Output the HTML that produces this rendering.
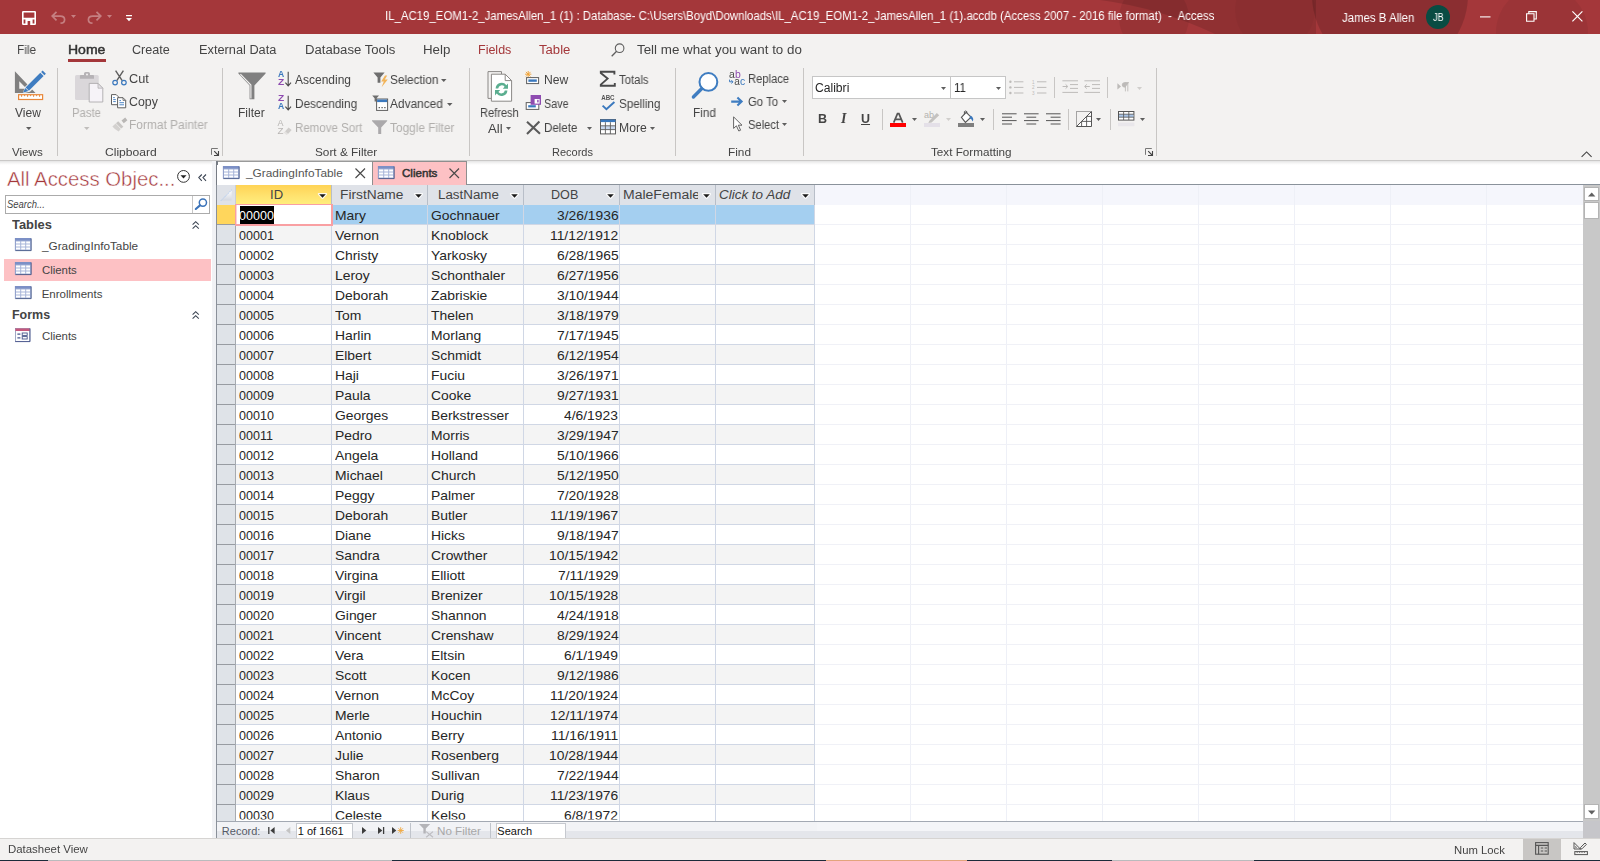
<!DOCTYPE html><html><head><meta charset="utf-8"><title>Access</title><style>

*{margin:0;padding:0;box-sizing:border-box}
html,body{width:1600px;height:861px;overflow:hidden;background:#fff}
body{position:relative;font-family:"Liberation Sans",sans-serif;font-size:12px;color:#444}
.b{position:absolute}
.t{position:absolute;z-index:4;white-space:pre;line-height:20px;height:20px;transform-origin:0 50%}
.i{position:absolute;overflow:visible;z-index:4}

</style></head><body>
<div class="b" style="left:0px;top:0px;width:1600px;height:34px;background:#A4373A;"></div>
<svg class="i" style="left:0;top:0;overflow:hidden" width="1600" height="34" viewBox="0 0 1600 34"><circle cx="1154" cy="18" r="35" fill="rgba(0,0,0,0.07)"/><path d="M1100 0Q1160 8 1215 34H1316V0Z" fill="rgba(0,0,0,0.12)"/><circle cx="1390" cy="-5" r="78" fill="rgba(0,0,0,0.15)"/><circle cx="1275" cy="10" r="40" fill="rgba(0,0,0,0.03)"/><circle cx="1542" cy="32" r="46" fill="rgba(0,0,0,0.05)"/></svg>
<div class="b" style="left:1426px;top:5px;width:24px;height:24px;background:#0B5A4F;border-radius:50%"></div>
<div class="b" style="left:0px;top:34px;width:1600px;height:126px;background:#F3F2F1;"></div>
<div class="b" style="left:0px;top:160px;width:1600px;height:1px;background:#C9C8C7;"></div>
<div class="b" style="left:0px;top:161px;width:1600px;height:4px;background:linear-gradient(#E4E4E4,#F4F4F4 50%,#FFFFFF);"></div>
<div class="b" style="left:68px;top:59px;width:38px;height:3px;background:#A4373A;"></div>
<div class="b" style="left:57px;top:68px;width:1px;height:88px;background:#C8C6C4;"></div>
<div class="b" style="left:222px;top:68px;width:1px;height:88px;background:#C8C6C4;"></div>
<div class="b" style="left:469px;top:68px;width:1px;height:88px;background:#C8C6C4;"></div>
<div class="b" style="left:675px;top:68px;width:1px;height:88px;background:#C8C6C4;"></div>
<div class="b" style="left:803px;top:68px;width:1px;height:88px;background:#C8C6C4;"></div>
<div class="b" style="left:1156px;top:68px;width:1px;height:88px;background:#C8C6C4;"></div>
<div class="b" style="left:812px;top:76px;width:139px;height:23px;background:#fff;border:1px solid #C6C6C6"></div>
<div class="b" style="left:950px;top:76px;width:56px;height:23px;background:#fff;border:1px solid #C6C6C6"></div>
<div class="b" style="left:1054px;top:77px;width:1px;height:21px;background:#C8C6C4;"></div>
<div class="b" style="left:1107px;top:77px;width:1px;height:21px;background:#C8C6C4;"></div>
<div class="b" style="left:882px;top:109px;width:1px;height:21px;background:#C8C6C4;"></div>
<div class="b" style="left:993px;top:109px;width:1px;height:21px;background:#C8C6C4;"></div>
<div class="b" style="left:1068px;top:109px;width:1px;height:21px;background:#C8C6C4;"></div>
<div class="b" style="left:1110px;top:109px;width:1px;height:21px;background:#C8C6C4;"></div>
<div class="b" style="left:0px;top:165px;width:212px;height:673px;background:#fff;"></div>
<div class="b" style="left:212px;top:161px;width:5px;height:677px;background:#F1F2F5;"></div>
<div class="b" style="left:216px;top:161px;width:1px;height:677px;background:#8A9099;"></div>
<div class="b" style="left:216px;top:161px;width:2px;height:24px;background:#777C84;"></div>
<div class="b" style="left:5px;top:195px;width:205px;height:19px;background:#fff;border:1px solid #ABABAB"></div>
<div class="b" style="left:192px;top:196px;width:1px;height:17px;background:#C6C6C6;"></div>
<div class="b" style="left:4px;top:259px;width:207px;height:22px;background:#FDC1C4;"></div>
<div class="b" style="left:217px;top:165px;width:1383px;height:20px;background:#fff;"></div>
<div class="b" style="left:218px;top:161px;width:154px;height:24px;background:#fff;border-top:1px solid #9A9A9A"></div>
<div class="b" style="left:372px;top:161px;width:95px;height:24px;background:#FDC1C4;border:1px solid #8E8E8E;border-bottom:none"></div>
<div class="b" style="left:467px;top:184px;width:1133px;height:1px;background:#8A929B;"></div>
<div class="b" style="left:217px;top:185px;width:598px;height:20px;background:#DFE2E8;"></div>
<div class="b" style="left:236px;top:185px;width:95px;height:19px;background:linear-gradient(#FFD355,#FFE370 60%,#FFEE7C);"></div>
<div class="b" style="left:815px;top:185px;width:768px;height:20px;background:#F5F6FC;"></div>
<div class="b" style="left:331px;top:185px;width:1px;height:20px;background:#B8BEC8;"></div>
<div class="b" style="left:427px;top:185px;width:1px;height:20px;background:#B8BEC8;"></div>
<div class="b" style="left:523px;top:185px;width:1px;height:20px;background:#B8BEC8;"></div>
<div class="b" style="left:619px;top:185px;width:1px;height:20px;background:#B8BEC8;"></div>
<div class="b" style="left:715px;top:185px;width:1px;height:20px;background:#B8BEC8;"></div>
<div class="b" style="left:814px;top:185px;width:1px;height:20px;background:#B8BEC8;"></div>
<div class="b" style="left:235px;top:185px;width:1px;height:20px;background:#C9CED6;"></div>
<div class="b" style="left:217px;top:205px;width:19px;height:20px;background:#FFD65C;"></div>
<div class="b" style="left:236px;top:205px;width:579px;height:19px;background:#A4CFF0;"></div>
<div class="b" style="left:235px;top:204px;width:98px;height:22px;background:#fff;border:solid #F99FA2;border-width:1px 2px 2px 1px;box-shadow:inset 1px 0 0 0 #FCD3D5;z-index:2"></div>
<div class="b" style="left:240px;top:206px;width:34px;height:18px;background:#000;z-index:2"></div>
<div class="b" style="left:236px;top:224px;width:579px;height:1px;background:#D0D7E5;"></div>
<div class="b" style="left:217px;top:224px;width:18px;height:1px;background:#989CA2;"></div>
<div class="b" style="left:217px;top:225px;width:19px;height:20px;background:#DFE3E8;"></div>
<div class="b" style="left:236px;top:225px;width:579px;height:20px;background:#F4F4F4;"></div>
<div class="b" style="left:236px;top:244px;width:579px;height:1px;background:#D0D7E5;"></div>
<div class="b" style="left:217px;top:244px;width:18px;height:1px;background:#989CA2;"></div>
<div class="b" style="left:217px;top:245px;width:19px;height:20px;background:#DFE3E8;"></div>
<div class="b" style="left:236px;top:245px;width:579px;height:20px;background:#FFFFFF;"></div>
<div class="b" style="left:236px;top:264px;width:579px;height:1px;background:#D0D7E5;"></div>
<div class="b" style="left:217px;top:264px;width:18px;height:1px;background:#989CA2;"></div>
<div class="b" style="left:217px;top:265px;width:19px;height:20px;background:#DFE3E8;"></div>
<div class="b" style="left:236px;top:265px;width:579px;height:20px;background:#F4F4F4;"></div>
<div class="b" style="left:236px;top:284px;width:579px;height:1px;background:#D0D7E5;"></div>
<div class="b" style="left:217px;top:284px;width:18px;height:1px;background:#989CA2;"></div>
<div class="b" style="left:217px;top:285px;width:19px;height:20px;background:#DFE3E8;"></div>
<div class="b" style="left:236px;top:285px;width:579px;height:20px;background:#FFFFFF;"></div>
<div class="b" style="left:236px;top:304px;width:579px;height:1px;background:#D0D7E5;"></div>
<div class="b" style="left:217px;top:304px;width:18px;height:1px;background:#989CA2;"></div>
<div class="b" style="left:217px;top:305px;width:19px;height:20px;background:#DFE3E8;"></div>
<div class="b" style="left:236px;top:305px;width:579px;height:20px;background:#F4F4F4;"></div>
<div class="b" style="left:236px;top:324px;width:579px;height:1px;background:#D0D7E5;"></div>
<div class="b" style="left:217px;top:324px;width:18px;height:1px;background:#989CA2;"></div>
<div class="b" style="left:217px;top:325px;width:19px;height:20px;background:#DFE3E8;"></div>
<div class="b" style="left:236px;top:325px;width:579px;height:20px;background:#FFFFFF;"></div>
<div class="b" style="left:236px;top:344px;width:579px;height:1px;background:#D0D7E5;"></div>
<div class="b" style="left:217px;top:344px;width:18px;height:1px;background:#989CA2;"></div>
<div class="b" style="left:217px;top:345px;width:19px;height:20px;background:#DFE3E8;"></div>
<div class="b" style="left:236px;top:345px;width:579px;height:20px;background:#F4F4F4;"></div>
<div class="b" style="left:236px;top:364px;width:579px;height:1px;background:#D0D7E5;"></div>
<div class="b" style="left:217px;top:364px;width:18px;height:1px;background:#989CA2;"></div>
<div class="b" style="left:217px;top:365px;width:19px;height:20px;background:#DFE3E8;"></div>
<div class="b" style="left:236px;top:365px;width:579px;height:20px;background:#FFFFFF;"></div>
<div class="b" style="left:236px;top:384px;width:579px;height:1px;background:#D0D7E5;"></div>
<div class="b" style="left:217px;top:384px;width:18px;height:1px;background:#989CA2;"></div>
<div class="b" style="left:217px;top:385px;width:19px;height:20px;background:#DFE3E8;"></div>
<div class="b" style="left:236px;top:385px;width:579px;height:20px;background:#F4F4F4;"></div>
<div class="b" style="left:236px;top:404px;width:579px;height:1px;background:#D0D7E5;"></div>
<div class="b" style="left:217px;top:404px;width:18px;height:1px;background:#989CA2;"></div>
<div class="b" style="left:217px;top:405px;width:19px;height:20px;background:#DFE3E8;"></div>
<div class="b" style="left:236px;top:405px;width:579px;height:20px;background:#FFFFFF;"></div>
<div class="b" style="left:236px;top:424px;width:579px;height:1px;background:#D0D7E5;"></div>
<div class="b" style="left:217px;top:424px;width:18px;height:1px;background:#989CA2;"></div>
<div class="b" style="left:217px;top:425px;width:19px;height:20px;background:#DFE3E8;"></div>
<div class="b" style="left:236px;top:425px;width:579px;height:20px;background:#F4F4F4;"></div>
<div class="b" style="left:236px;top:444px;width:579px;height:1px;background:#D0D7E5;"></div>
<div class="b" style="left:217px;top:444px;width:18px;height:1px;background:#989CA2;"></div>
<div class="b" style="left:217px;top:445px;width:19px;height:20px;background:#DFE3E8;"></div>
<div class="b" style="left:236px;top:445px;width:579px;height:20px;background:#FFFFFF;"></div>
<div class="b" style="left:236px;top:464px;width:579px;height:1px;background:#D0D7E5;"></div>
<div class="b" style="left:217px;top:464px;width:18px;height:1px;background:#989CA2;"></div>
<div class="b" style="left:217px;top:465px;width:19px;height:20px;background:#DFE3E8;"></div>
<div class="b" style="left:236px;top:465px;width:579px;height:20px;background:#F4F4F4;"></div>
<div class="b" style="left:236px;top:484px;width:579px;height:1px;background:#D0D7E5;"></div>
<div class="b" style="left:217px;top:484px;width:18px;height:1px;background:#989CA2;"></div>
<div class="b" style="left:217px;top:485px;width:19px;height:20px;background:#DFE3E8;"></div>
<div class="b" style="left:236px;top:485px;width:579px;height:20px;background:#FFFFFF;"></div>
<div class="b" style="left:236px;top:504px;width:579px;height:1px;background:#D0D7E5;"></div>
<div class="b" style="left:217px;top:504px;width:18px;height:1px;background:#989CA2;"></div>
<div class="b" style="left:217px;top:505px;width:19px;height:20px;background:#DFE3E8;"></div>
<div class="b" style="left:236px;top:505px;width:579px;height:20px;background:#F4F4F4;"></div>
<div class="b" style="left:236px;top:524px;width:579px;height:1px;background:#D0D7E5;"></div>
<div class="b" style="left:217px;top:524px;width:18px;height:1px;background:#989CA2;"></div>
<div class="b" style="left:217px;top:525px;width:19px;height:20px;background:#DFE3E8;"></div>
<div class="b" style="left:236px;top:525px;width:579px;height:20px;background:#FFFFFF;"></div>
<div class="b" style="left:236px;top:544px;width:579px;height:1px;background:#D0D7E5;"></div>
<div class="b" style="left:217px;top:544px;width:18px;height:1px;background:#989CA2;"></div>
<div class="b" style="left:217px;top:545px;width:19px;height:20px;background:#DFE3E8;"></div>
<div class="b" style="left:236px;top:545px;width:579px;height:20px;background:#F4F4F4;"></div>
<div class="b" style="left:236px;top:564px;width:579px;height:1px;background:#D0D7E5;"></div>
<div class="b" style="left:217px;top:564px;width:18px;height:1px;background:#989CA2;"></div>
<div class="b" style="left:217px;top:565px;width:19px;height:20px;background:#DFE3E8;"></div>
<div class="b" style="left:236px;top:565px;width:579px;height:20px;background:#FFFFFF;"></div>
<div class="b" style="left:236px;top:584px;width:579px;height:1px;background:#D0D7E5;"></div>
<div class="b" style="left:217px;top:584px;width:18px;height:1px;background:#989CA2;"></div>
<div class="b" style="left:217px;top:585px;width:19px;height:20px;background:#DFE3E8;"></div>
<div class="b" style="left:236px;top:585px;width:579px;height:20px;background:#F4F4F4;"></div>
<div class="b" style="left:236px;top:604px;width:579px;height:1px;background:#D0D7E5;"></div>
<div class="b" style="left:217px;top:604px;width:18px;height:1px;background:#989CA2;"></div>
<div class="b" style="left:217px;top:605px;width:19px;height:20px;background:#DFE3E8;"></div>
<div class="b" style="left:236px;top:605px;width:579px;height:20px;background:#FFFFFF;"></div>
<div class="b" style="left:236px;top:624px;width:579px;height:1px;background:#D0D7E5;"></div>
<div class="b" style="left:217px;top:624px;width:18px;height:1px;background:#989CA2;"></div>
<div class="b" style="left:217px;top:625px;width:19px;height:20px;background:#DFE3E8;"></div>
<div class="b" style="left:236px;top:625px;width:579px;height:20px;background:#F4F4F4;"></div>
<div class="b" style="left:236px;top:644px;width:579px;height:1px;background:#D0D7E5;"></div>
<div class="b" style="left:217px;top:644px;width:18px;height:1px;background:#989CA2;"></div>
<div class="b" style="left:217px;top:645px;width:19px;height:20px;background:#DFE3E8;"></div>
<div class="b" style="left:236px;top:645px;width:579px;height:20px;background:#FFFFFF;"></div>
<div class="b" style="left:236px;top:664px;width:579px;height:1px;background:#D0D7E5;"></div>
<div class="b" style="left:217px;top:664px;width:18px;height:1px;background:#989CA2;"></div>
<div class="b" style="left:217px;top:665px;width:19px;height:20px;background:#DFE3E8;"></div>
<div class="b" style="left:236px;top:665px;width:579px;height:20px;background:#F4F4F4;"></div>
<div class="b" style="left:236px;top:684px;width:579px;height:1px;background:#D0D7E5;"></div>
<div class="b" style="left:217px;top:684px;width:18px;height:1px;background:#989CA2;"></div>
<div class="b" style="left:217px;top:685px;width:19px;height:20px;background:#DFE3E8;"></div>
<div class="b" style="left:236px;top:685px;width:579px;height:20px;background:#FFFFFF;"></div>
<div class="b" style="left:236px;top:704px;width:579px;height:1px;background:#D0D7E5;"></div>
<div class="b" style="left:217px;top:704px;width:18px;height:1px;background:#989CA2;"></div>
<div class="b" style="left:217px;top:705px;width:19px;height:20px;background:#DFE3E8;"></div>
<div class="b" style="left:236px;top:705px;width:579px;height:20px;background:#F4F4F4;"></div>
<div class="b" style="left:236px;top:724px;width:579px;height:1px;background:#D0D7E5;"></div>
<div class="b" style="left:217px;top:724px;width:18px;height:1px;background:#989CA2;"></div>
<div class="b" style="left:217px;top:725px;width:19px;height:20px;background:#DFE3E8;"></div>
<div class="b" style="left:236px;top:725px;width:579px;height:20px;background:#FFFFFF;"></div>
<div class="b" style="left:236px;top:744px;width:579px;height:1px;background:#D0D7E5;"></div>
<div class="b" style="left:217px;top:744px;width:18px;height:1px;background:#989CA2;"></div>
<div class="b" style="left:217px;top:745px;width:19px;height:20px;background:#DFE3E8;"></div>
<div class="b" style="left:236px;top:745px;width:579px;height:20px;background:#F4F4F4;"></div>
<div class="b" style="left:236px;top:764px;width:579px;height:1px;background:#D0D7E5;"></div>
<div class="b" style="left:217px;top:764px;width:18px;height:1px;background:#989CA2;"></div>
<div class="b" style="left:217px;top:765px;width:19px;height:20px;background:#DFE3E8;"></div>
<div class="b" style="left:236px;top:765px;width:579px;height:20px;background:#FFFFFF;"></div>
<div class="b" style="left:236px;top:784px;width:579px;height:1px;background:#D0D7E5;"></div>
<div class="b" style="left:217px;top:784px;width:18px;height:1px;background:#989CA2;"></div>
<div class="b" style="left:217px;top:785px;width:19px;height:20px;background:#DFE3E8;"></div>
<div class="b" style="left:236px;top:785px;width:579px;height:20px;background:#F4F4F4;"></div>
<div class="b" style="left:236px;top:804px;width:579px;height:1px;background:#D0D7E5;"></div>
<div class="b" style="left:217px;top:804px;width:18px;height:1px;background:#989CA2;"></div>
<div class="b" style="left:217px;top:805px;width:19px;height:16px;background:#DFE3E8;"></div>
<div class="b" style="left:236px;top:805px;width:579px;height:16px;background:#FFFFFF;"></div>
<div class="b" style="left:698.2px;top:186px;width:3.6px;height:18px;background:#DFE2E8;z-index:5"></div>
<div class="b" style="left:331px;top:205px;width:1px;height:616px;background:#D0D7E5;"></div>
<div class="b" style="left:427px;top:205px;width:1px;height:616px;background:#D0D7E5;"></div>
<div class="b" style="left:523px;top:205px;width:1px;height:616px;background:#D0D7E5;"></div>
<div class="b" style="left:619px;top:205px;width:1px;height:616px;background:#D0D7E5;"></div>
<div class="b" style="left:715px;top:205px;width:1px;height:616px;background:#D0D7E5;"></div>
<div class="b" style="left:814px;top:205px;width:1px;height:616px;background:#D0D7E5;"></div>
<div class="b" style="left:235px;top:225px;width:1px;height:596px;background:#A6AAB0;"></div>
<div class="b" style="left:910px;top:185px;width:1px;height:636px;background:#EEF0F7;"></div>
<div class="b" style="left:1006px;top:185px;width:1px;height:636px;background:#EEF0F7;"></div>
<div class="b" style="left:1102px;top:185px;width:1px;height:636px;background:#EEF0F7;"></div>
<div class="b" style="left:1198px;top:185px;width:1px;height:636px;background:#EEF0F7;"></div>
<div class="b" style="left:1294px;top:185px;width:1px;height:636px;background:#EEF0F7;"></div>
<div class="b" style="left:1390px;top:185px;width:1px;height:636px;background:#EEF0F7;"></div>
<div class="b" style="left:1486px;top:185px;width:1px;height:636px;background:#EEF0F7;"></div>
<div class="b" style="left:815px;top:224px;width:768px;height:1px;background:#F0F1F7;"></div>
<div class="b" style="left:815px;top:244px;width:768px;height:1px;background:#F0F1F7;"></div>
<div class="b" style="left:815px;top:264px;width:768px;height:1px;background:#F0F1F7;"></div>
<div class="b" style="left:815px;top:284px;width:768px;height:1px;background:#F0F1F7;"></div>
<div class="b" style="left:815px;top:304px;width:768px;height:1px;background:#F0F1F7;"></div>
<div class="b" style="left:815px;top:324px;width:768px;height:1px;background:#F0F1F7;"></div>
<div class="b" style="left:815px;top:344px;width:768px;height:1px;background:#F0F1F7;"></div>
<div class="b" style="left:815px;top:364px;width:768px;height:1px;background:#F0F1F7;"></div>
<div class="b" style="left:815px;top:384px;width:768px;height:1px;background:#F0F1F7;"></div>
<div class="b" style="left:815px;top:404px;width:768px;height:1px;background:#F0F1F7;"></div>
<div class="b" style="left:815px;top:424px;width:768px;height:1px;background:#F0F1F7;"></div>
<div class="b" style="left:815px;top:444px;width:768px;height:1px;background:#F0F1F7;"></div>
<div class="b" style="left:815px;top:464px;width:768px;height:1px;background:#F0F1F7;"></div>
<div class="b" style="left:815px;top:484px;width:768px;height:1px;background:#F0F1F7;"></div>
<div class="b" style="left:815px;top:504px;width:768px;height:1px;background:#F0F1F7;"></div>
<div class="b" style="left:815px;top:524px;width:768px;height:1px;background:#F0F1F7;"></div>
<div class="b" style="left:815px;top:544px;width:768px;height:1px;background:#F0F1F7;"></div>
<div class="b" style="left:815px;top:564px;width:768px;height:1px;background:#F0F1F7;"></div>
<div class="b" style="left:815px;top:584px;width:768px;height:1px;background:#F0F1F7;"></div>
<div class="b" style="left:815px;top:604px;width:768px;height:1px;background:#F0F1F7;"></div>
<div class="b" style="left:815px;top:624px;width:768px;height:1px;background:#F0F1F7;"></div>
<div class="b" style="left:815px;top:644px;width:768px;height:1px;background:#F0F1F7;"></div>
<div class="b" style="left:815px;top:664px;width:768px;height:1px;background:#F0F1F7;"></div>
<div class="b" style="left:815px;top:684px;width:768px;height:1px;background:#F0F1F7;"></div>
<div class="b" style="left:815px;top:704px;width:768px;height:1px;background:#F0F1F7;"></div>
<div class="b" style="left:815px;top:724px;width:768px;height:1px;background:#F0F1F7;"></div>
<div class="b" style="left:815px;top:744px;width:768px;height:1px;background:#F0F1F7;"></div>
<div class="b" style="left:815px;top:764px;width:768px;height:1px;background:#F0F1F7;"></div>
<div class="b" style="left:815px;top:784px;width:768px;height:1px;background:#F0F1F7;"></div>
<div class="b" style="left:815px;top:804px;width:768px;height:1px;background:#F0F1F7;"></div>
<div class="b" style="left:1583px;top:185px;width:17px;height:636px;background:#C8C8C8;"></div>
<div class="b" style="left:1584px;top:187px;width:15px;height:14px;background:#fff;border:1px solid #B4B4B4"></div>
<div class="b" style="left:1584px;top:202px;width:15px;height:17px;background:#fff;border:1px solid #B4B4B4"></div>
<div class="b" style="left:1584px;top:804px;width:15px;height:15px;background:#fff;border:1px solid #B4B4B4"></div>
<div class="b" style="left:217px;top:821px;width:1366px;height:1px;background:#A3A9B3;"></div>
<div class="b" style="left:217px;top:822px;width:600px;height:9px;background:#F2F3F6;"></div>
<div class="b" style="left:217px;top:831px;width:600px;height:7px;background:#E4E6EB;"></div>
<div class="b" style="left:817px;top:822px;width:766px;height:9px;background:#F4F5F8;"></div>
<div class="b" style="left:817px;top:831px;width:766px;height:7px;background:#E4E6EB;"></div>
<div class="b" style="left:1583px;top:821px;width:17px;height:17px;background:#C6C6CA;"></div>
<div class="b" style="left:296px;top:823px;width:57px;height:15px;background:#fff;border:1px solid #C6C9CF;border-bottom:none"></div>
<div class="b" style="left:496px;top:823px;width:70px;height:15px;background:#fff;border:1px solid #C6C9CF;border-bottom:none"></div>
<div class="b" style="left:410px;top:823px;width:1px;height:15px;background:#C0C4CB;"></div>
<div class="b" style="left:490px;top:823px;width:1px;height:15px;background:#C0C4CB;"></div>
<div class="b" style="left:0px;top:838px;width:1600px;height:22px;background:#F3F2F1;"></div>
<div class="b" style="left:0px;top:838px;width:1600px;height:1px;background:#D6D4D2;"></div>
<div class="b" style="left:1523px;top:839px;width:38px;height:21px;background:#C8C6C4;"></div>
<div class="b" style="left:0px;top:860px;width:1600px;height:1px;background:#1C2B3A;"></div>
<div class="b" style="left:48px;top:860px;width:344px;height:1px;background:#B9BBBD;"></div>
<div class="b" style="left:826px;top:860px;width:141px;height:1px;background:#E3A47C;"></div>
<div class="b" style="left:1112px;top:860px;width:142px;height:1px;background:#B9BBBD;"></div>
<span class="t" style="top:5.84px;font-size:12px;color:#fff;transform:scaleX(0.9506);left:384.98px;will-change:transform;">IL_AC19_EOM1-2_JamesAllen_1 (1) : Database- C:\Users\Boyd\Downloads\IL_AC19_EOM1-2_JamesAllen_1 (1).accdb (Access 2007 - 2016 file format)  -  Access</span>
<span class="t" style="top:7.67px;font-size:12.5px;color:#fff;transform:scaleX(0.9136);left:1342.25px;will-change:transform;">James B Allen</span>
<span class="t" style="top:7.54px;font-size:10px;color:#fff;transform:scaleX(0.9167);left:1432.65px;will-change:transform;">JB</span>
<span class="t" style="top:39.67px;font-size:12.5px;color:#444444;transform:scaleX(0.9464);left:16.55px;will-change:transform;">File</span>
<span class="t" style="top:39.67px;font-size:12.5px;color:#333;transform:scaleX(1.1209);left:67.75px;will-change:transform;-webkit-text-stroke:0.45px #333;">Home</span>
<span class="t" style="top:39.67px;font-size:12.5px;color:#444444;transform:scaleX(1.0092);left:131.75px;will-change:transform;">Create</span>
<span class="t" style="top:39.67px;font-size:12.5px;color:#444444;transform:scaleX(1.0217);left:199.25px;will-change:transform;">External Data</span>
<span class="t" style="top:39.67px;font-size:12.5px;color:#444444;transform:scaleX(1.0516);left:305.25px;will-change:transform;">Database Tools</span>
<span class="t" style="top:39.67px;font-size:12.5px;color:#444444;transform:scaleX(1.0644);left:423.25px;will-change:transform;">Help</span>
<span class="t" style="top:39.67px;font-size:12.5px;color:#A4373A;left:478.25px;will-change:transform;">Fields</span>
<span class="t" style="top:39.67px;font-size:12.5px;color:#A4373A;transform:scaleX(1.0497);left:539.25px;will-change:transform;">Table</span>
<span class="t" style="top:39.67px;font-size:12.5px;color:#444444;transform:scaleX(1.0689);left:637.25px;will-change:transform;">Tell me what you want to do</span>
<span class="t" style="top:142.19px;font-size:11px;color:#444444;transform:scaleX(1.0553);left:12.34px;will-change:transform;">Views</span>
<span class="t" style="top:142.19px;font-size:11px;color:#444444;transform:scaleX(1.0993);left:105.34px;will-change:transform;">Clipboard</span>
<span class="t" style="top:142.19px;font-size:11px;color:#444444;transform:scaleX(1.0722);left:314.74px;will-change:transform;">Sort &amp; Filter</span>
<span class="t" style="top:142.19px;font-size:11px;color:#444444;left:551.64px;will-change:transform;">Records</span>
<span class="t" style="top:142.19px;font-size:11px;color:#444444;transform:scaleX(1.0731);left:727.84px;will-change:transform;">Find</span>
<span class="t" style="top:142.19px;font-size:11px;color:#444444;transform:scaleX(1.0628);left:931.14px;will-change:transform;">Text Formatting</span>
<span class="t" style="top:103.14px;font-size:12px;color:#444444;left:15.28px;will-change:transform;">View</span>
<span class="t" style="top:103.14px;font-size:12px;color:#B1AFAD;transform:scaleX(0.9398);left:72.28px;will-change:transform;">Paste</span>
<span class="t" style="top:68.84px;font-size:12px;color:#444444;transform:scaleX(1.0617);left:129.28px;will-change:transform;">Cut</span>
<span class="t" style="top:91.84px;font-size:12px;color:#444444;transform:scaleX(1.0294);left:129.28px;will-change:transform;">Copy</span>
<span class="t" style="top:114.84px;font-size:12px;color:#B1AFAD;transform:scaleX(0.9935);left:129.28px;will-change:transform;">Format Painter</span>
<span class="t" style="top:103.14px;font-size:12px;color:#444444;left:238.48px;will-change:transform;">Filter</span>
<span class="t" style="top:69.84px;font-size:12px;color:#444444;left:294.68px;will-change:transform;">Ascending</span>
<span class="t" style="top:93.84px;font-size:12px;color:#444444;transform:scaleX(0.9805);left:294.68px;will-change:transform;">Descending</span>
<span class="t" style="top:117.84px;font-size:12px;color:#B1AFAD;transform:scaleX(0.9601);left:294.68px;will-change:transform;">Remove Sort</span>
<span class="t" style="top:69.84px;font-size:12px;color:#444444;transform:scaleX(0.9811);left:390.28px;will-change:transform;">Selection</span>
<span class="t" style="top:93.84px;font-size:12px;color:#444444;transform:scaleX(0.9900);left:390.28px;will-change:transform;">Advanced</span>
<span class="t" style="top:117.84px;font-size:12px;color:#B1AFAD;transform:scaleX(0.9872);left:390.28px;will-change:transform;">Toggle Filter</span>
<span class="t" style="top:103.14px;font-size:12px;color:#444444;transform:scaleX(0.9217);left:479.88px;will-change:transform;">Refresh</span>
<span class="t" style="top:118.84px;font-size:12px;color:#444444;transform:scaleX(1.0971);left:488.28px;will-change:transform;">All</span>
<span class="t" style="top:69.84px;font-size:12px;color:#444444;transform:scaleX(1.0093);left:543.68px;will-change:transform;">New</span>
<span class="t" style="top:93.84px;font-size:12px;color:#444444;transform:scaleX(0.8970);left:543.68px;will-change:transform;">Save</span>
<span class="t" style="top:117.84px;font-size:12px;color:#444444;transform:scaleX(0.9612);left:543.68px;will-change:transform;">Delete</span>
<span class="t" style="top:69.84px;font-size:12px;color:#444444;transform:scaleX(0.9436);left:619.28px;will-change:transform;">Totals</span>
<span class="t" style="top:93.84px;font-size:12px;color:#444444;transform:scaleX(0.9704);left:619.28px;will-change:transform;">Spelling</span>
<span class="t" style="top:117.84px;font-size:12px;color:#444444;transform:scaleX(1.0145);left:619.28px;will-change:transform;">More</span>
<span class="t" style="top:103.14px;font-size:12px;color:#444444;transform:scaleX(0.9784);left:692.78px;will-change:transform;">Find</span>
<span class="t" style="top:68.84px;font-size:12px;color:#444444;transform:scaleX(0.9343);left:747.78px;will-change:transform;">Replace</span>
<span class="t" style="top:91.84px;font-size:12px;color:#444444;transform:scaleX(0.9411);left:747.78px;will-change:transform;">Go To</span>
<span class="t" style="top:114.84px;font-size:12px;color:#444444;transform:scaleX(0.9305);left:747.78px;will-change:transform;">Select</span>
<span class="t" style="top:77.84px;font-size:12px;color:#262626;transform:scaleX(1.0095);left:814.78px;will-change:transform;">Calibri</span>
<span class="t" style="top:77.84px;font-size:12px;color:#262626;transform:scaleX(0.9496);left:953.78px;will-change:transform;">11</span>
<span class="t" style="top:108.67px;font-size:12.5px;color:#444;font-weight:700;left:818.25px;will-change:transform;">B</span>
<span class="t" style="top:108.67px;font-size:12.5px;color:#444;font-style:italic;left:840.75px;will-change:transform;font-family:'Liberation Serif',serif;font-weight:700;font-size:14px;">I</span>
<span class="t" style="top:108.67px;font-size:12.5px;color:#444;font-weight:700;left:861.45px;will-change:transform;text-decoration:underline;text-underline-offset:1px;">U</span>
<span class="t" style="top:168.86px;font-size:20.6px;color:#A4373A;transform:scaleX(0.9871);left:6.86px;-webkit-text-stroke:0.45px #fff;">All Access Objec...</span>
<span class="t" style="top:194.02px;font-size:11.5px;color:#444;font-style:italic;transform:scaleX(0.8213);left:7.31px;">Search...</span>
<span class="t" style="top:214.67px;font-size:12.5px;color:#444;font-weight:700;transform:scaleX(1.0311);left:11.55px;">Tables</span>
<span class="t" style="top:236.02px;font-size:11.5px;color:#444;transform:scaleX(1.0226);left:41.71px;">_GradingInfoTable</span>
<span class="t" style="top:260.02px;font-size:11.5px;color:#444;transform:scaleX(0.9900);left:41.71px;">Clients</span>
<span class="t" style="top:284.02px;font-size:11.5px;color:#444;left:41.71px;">Enrollments</span>
<span class="t" style="top:304.67px;font-size:12.5px;color:#444;font-weight:700;transform:scaleX(0.9966);left:12.05px;">Forms</span>
<span class="t" style="top:326.02px;font-size:11.5px;color:#444;transform:scaleX(0.9900);left:41.71px;">Clients</span>
<span class="t" style="top:163.02px;font-size:11.5px;color:#555;transform:scaleX(1.0300);left:246.31px;">_GradingInfoTable</span>
<span class="t" style="top:163.02px;font-size:11.5px;color:#333;transform:scaleX(1.0071);left:401.81px;-webkit-text-stroke:0.5px #333;">Clients</span>
<span class="t" style="top:184.67px;font-size:12.5px;color:#444;transform:scaleX(1.0460);left:270.36px;">ID</span>
<span class="t" style="top:184.67px;font-size:12.5px;color:#444;transform:scaleX(1.1009);left:339.55px;">FirstName</span>
<span class="t" style="top:184.67px;font-size:12.5px;color:#444;transform:scaleX(1.0683);left:437.55px;">LastName</span>
<span class="t" style="top:184.67px;font-size:12.5px;color:#444;transform:scaleX(1.0067);left:550.75px;">DOB</span>
<span class="t" style="top:184.67px;font-size:12.5px;color:#444;transform:scaleX(1.1206);left:622.55px;">MaleFemale</span>
<span class="t" style="top:184.67px;font-size:12.5px;color:#444;font-style:italic;transform:scaleX(1.0746);left:718.55px;">Click to Add</span>
<span class="t" style="top:205.50px;font-size:13px;color:#fff;transform:scaleX(0.9650);left:238.82px;">00000</span>
<span class="t" style="top:205.50px;font-size:13px;color:#262626;transform:scaleX(1.0680);left:335.02px;">Mary</span>
<span class="t" style="top:205.50px;font-size:13px;color:#262626;transform:scaleX(1.0680);left:430.82px;">Gochnauer</span>
<span class="t" style="top:205.50px;font-size:13px;color:#262626;transform:scaleX(1.0650);left:556.52px;">3/26/1936</span>
<span class="t" style="top:225.50px;font-size:13px;color:#262626;transform:scaleX(0.9650);left:238.82px;">00001</span>
<span class="t" style="top:225.50px;font-size:13px;color:#262626;transform:scaleX(1.0680);left:335.02px;">Vernon</span>
<span class="t" style="top:225.50px;font-size:13px;color:#262626;transform:scaleX(1.0680);left:430.82px;">Knoblock</span>
<span class="t" style="top:225.50px;font-size:13px;color:#262626;transform:scaleX(1.0650);left:549.84px;">11/12/1912</span>
<span class="t" style="top:245.50px;font-size:13px;color:#262626;transform:scaleX(0.9650);left:238.82px;">00002</span>
<span class="t" style="top:245.50px;font-size:13px;color:#262626;transform:scaleX(1.0680);left:335.02px;">Christy</span>
<span class="t" style="top:245.50px;font-size:13px;color:#262626;transform:scaleX(1.0680);left:430.82px;">Yarkosky</span>
<span class="t" style="top:245.50px;font-size:13px;color:#262626;transform:scaleX(1.0650);left:556.52px;">6/28/1965</span>
<span class="t" style="top:265.50px;font-size:13px;color:#262626;transform:scaleX(0.9650);left:238.82px;">00003</span>
<span class="t" style="top:265.50px;font-size:13px;color:#262626;transform:scaleX(1.0680);left:335.02px;">Leroy</span>
<span class="t" style="top:265.50px;font-size:13px;color:#262626;transform:scaleX(1.0680);left:430.82px;">Schonthaler</span>
<span class="t" style="top:265.50px;font-size:13px;color:#262626;transform:scaleX(1.0650);left:556.52px;">6/27/1956</span>
<span class="t" style="top:285.50px;font-size:13px;color:#262626;transform:scaleX(0.9650);left:238.82px;">00004</span>
<span class="t" style="top:285.50px;font-size:13px;color:#262626;transform:scaleX(1.0680);left:335.02px;">Deborah</span>
<span class="t" style="top:285.50px;font-size:13px;color:#262626;transform:scaleX(1.0680);left:430.82px;">Zabriskie</span>
<span class="t" style="top:285.50px;font-size:13px;color:#262626;transform:scaleX(1.0650);left:556.52px;">3/10/1944</span>
<span class="t" style="top:305.50px;font-size:13px;color:#262626;transform:scaleX(0.9650);left:238.82px;">00005</span>
<span class="t" style="top:305.50px;font-size:13px;color:#262626;transform:scaleX(1.0680);left:335.02px;">Tom</span>
<span class="t" style="top:305.50px;font-size:13px;color:#262626;transform:scaleX(1.0680);left:430.82px;">Thelen</span>
<span class="t" style="top:305.50px;font-size:13px;color:#262626;transform:scaleX(1.0650);left:556.52px;">3/18/1979</span>
<span class="t" style="top:325.50px;font-size:13px;color:#262626;transform:scaleX(0.9650);left:238.82px;">00006</span>
<span class="t" style="top:325.50px;font-size:13px;color:#262626;transform:scaleX(1.0680);left:335.02px;">Harlin</span>
<span class="t" style="top:325.50px;font-size:13px;color:#262626;transform:scaleX(1.0680);left:430.82px;">Morlang</span>
<span class="t" style="top:325.50px;font-size:13px;color:#262626;transform:scaleX(1.0650);left:556.52px;">7/17/1945</span>
<span class="t" style="top:345.50px;font-size:13px;color:#262626;transform:scaleX(0.9650);left:238.82px;">00007</span>
<span class="t" style="top:345.50px;font-size:13px;color:#262626;transform:scaleX(1.0680);left:335.02px;">Elbert</span>
<span class="t" style="top:345.50px;font-size:13px;color:#262626;transform:scaleX(1.0680);left:430.82px;">Schmidt</span>
<span class="t" style="top:345.50px;font-size:13px;color:#262626;transform:scaleX(1.0650);left:556.52px;">6/12/1954</span>
<span class="t" style="top:365.50px;font-size:13px;color:#262626;transform:scaleX(0.9650);left:238.82px;">00008</span>
<span class="t" style="top:365.50px;font-size:13px;color:#262626;transform:scaleX(1.0680);left:335.02px;">Haji</span>
<span class="t" style="top:365.50px;font-size:13px;color:#262626;transform:scaleX(1.0680);left:430.82px;">Fuciu</span>
<span class="t" style="top:365.50px;font-size:13px;color:#262626;transform:scaleX(1.0650);left:556.52px;">3/26/1971</span>
<span class="t" style="top:385.50px;font-size:13px;color:#262626;transform:scaleX(0.9650);left:238.82px;">00009</span>
<span class="t" style="top:385.50px;font-size:13px;color:#262626;transform:scaleX(1.0680);left:335.02px;">Paula</span>
<span class="t" style="top:385.50px;font-size:13px;color:#262626;transform:scaleX(1.0680);left:430.82px;">Cooke</span>
<span class="t" style="top:385.50px;font-size:13px;color:#262626;transform:scaleX(1.0650);left:556.52px;">9/27/1931</span>
<span class="t" style="top:405.50px;font-size:13px;color:#262626;transform:scaleX(0.9650);left:238.82px;">00010</span>
<span class="t" style="top:405.50px;font-size:13px;color:#262626;transform:scaleX(1.0680);left:335.02px;">Georges</span>
<span class="t" style="top:405.50px;font-size:13px;color:#262626;transform:scaleX(1.0680);left:430.82px;">Berkstresser</span>
<span class="t" style="top:405.50px;font-size:13px;color:#262626;transform:scaleX(1.0650);left:564.22px;">4/6/1923</span>
<span class="t" style="top:425.50px;font-size:13px;color:#262626;transform:scaleX(0.9650);left:238.82px;">00011</span>
<span class="t" style="top:425.50px;font-size:13px;color:#262626;transform:scaleX(1.0680);left:335.02px;">Pedro</span>
<span class="t" style="top:425.50px;font-size:13px;color:#262626;transform:scaleX(1.0680);left:430.82px;">Morris</span>
<span class="t" style="top:425.50px;font-size:13px;color:#262626;transform:scaleX(1.0650);left:556.52px;">3/29/1947</span>
<span class="t" style="top:445.50px;font-size:13px;color:#262626;transform:scaleX(0.9650);left:238.82px;">00012</span>
<span class="t" style="top:445.50px;font-size:13px;color:#262626;transform:scaleX(1.0680);left:335.02px;">Angela</span>
<span class="t" style="top:445.50px;font-size:13px;color:#262626;transform:scaleX(1.0680);left:430.82px;">Holland</span>
<span class="t" style="top:445.50px;font-size:13px;color:#262626;transform:scaleX(1.0650);left:556.52px;">5/10/1966</span>
<span class="t" style="top:465.50px;font-size:13px;color:#262626;transform:scaleX(0.9650);left:238.82px;">00013</span>
<span class="t" style="top:465.50px;font-size:13px;color:#262626;transform:scaleX(1.0680);left:335.02px;">Michael</span>
<span class="t" style="top:465.50px;font-size:13px;color:#262626;transform:scaleX(1.0680);left:430.82px;">Church</span>
<span class="t" style="top:465.50px;font-size:13px;color:#262626;transform:scaleX(1.0650);left:556.52px;">5/12/1950</span>
<span class="t" style="top:485.50px;font-size:13px;color:#262626;transform:scaleX(0.9650);left:238.82px;">00014</span>
<span class="t" style="top:485.50px;font-size:13px;color:#262626;transform:scaleX(1.0680);left:335.02px;">Peggy</span>
<span class="t" style="top:485.50px;font-size:13px;color:#262626;transform:scaleX(1.0680);left:430.82px;">Palmer</span>
<span class="t" style="top:485.50px;font-size:13px;color:#262626;transform:scaleX(1.0650);left:556.52px;">7/20/1928</span>
<span class="t" style="top:505.50px;font-size:13px;color:#262626;transform:scaleX(0.9650);left:238.82px;">00015</span>
<span class="t" style="top:505.50px;font-size:13px;color:#262626;transform:scaleX(1.0680);left:335.02px;">Deborah</span>
<span class="t" style="top:505.50px;font-size:13px;color:#262626;transform:scaleX(1.0680);left:430.82px;">Butler</span>
<span class="t" style="top:505.50px;font-size:13px;color:#262626;transform:scaleX(1.0650);left:549.84px;">11/19/1967</span>
<span class="t" style="top:525.50px;font-size:13px;color:#262626;transform:scaleX(0.9650);left:238.82px;">00016</span>
<span class="t" style="top:525.50px;font-size:13px;color:#262626;transform:scaleX(1.0680);left:335.02px;">Diane</span>
<span class="t" style="top:525.50px;font-size:13px;color:#262626;transform:scaleX(1.0680);left:430.82px;">Hicks</span>
<span class="t" style="top:525.50px;font-size:13px;color:#262626;transform:scaleX(1.0650);left:556.52px;">9/18/1947</span>
<span class="t" style="top:545.50px;font-size:13px;color:#262626;transform:scaleX(0.9650);left:238.82px;">00017</span>
<span class="t" style="top:545.50px;font-size:13px;color:#262626;transform:scaleX(1.0680);left:335.02px;">Sandra</span>
<span class="t" style="top:545.50px;font-size:13px;color:#262626;transform:scaleX(1.0680);left:430.82px;">Crowther</span>
<span class="t" style="top:545.50px;font-size:13px;color:#262626;transform:scaleX(1.0650);left:548.81px;">10/15/1942</span>
<span class="t" style="top:565.50px;font-size:13px;color:#262626;transform:scaleX(0.9650);left:238.82px;">00018</span>
<span class="t" style="top:565.50px;font-size:13px;color:#262626;transform:scaleX(1.0680);left:335.02px;">Virgina</span>
<span class="t" style="top:565.50px;font-size:13px;color:#262626;transform:scaleX(1.0680);left:430.82px;">Elliott</span>
<span class="t" style="top:565.50px;font-size:13px;color:#262626;transform:scaleX(1.0650);left:557.55px;">7/11/1929</span>
<span class="t" style="top:585.50px;font-size:13px;color:#262626;transform:scaleX(0.9650);left:238.82px;">00019</span>
<span class="t" style="top:585.50px;font-size:13px;color:#262626;transform:scaleX(1.0680);left:335.02px;">Virgil</span>
<span class="t" style="top:585.50px;font-size:13px;color:#262626;transform:scaleX(1.0680);left:430.82px;">Brenizer</span>
<span class="t" style="top:585.50px;font-size:13px;color:#262626;transform:scaleX(1.0650);left:548.81px;">10/15/1928</span>
<span class="t" style="top:605.50px;font-size:13px;color:#262626;transform:scaleX(0.9650);left:238.82px;">00020</span>
<span class="t" style="top:605.50px;font-size:13px;color:#262626;transform:scaleX(1.0680);left:335.02px;">Ginger</span>
<span class="t" style="top:605.50px;font-size:13px;color:#262626;transform:scaleX(1.0680);left:430.82px;">Shannon</span>
<span class="t" style="top:605.50px;font-size:13px;color:#262626;transform:scaleX(1.0650);left:556.52px;">4/24/1918</span>
<span class="t" style="top:625.50px;font-size:13px;color:#262626;transform:scaleX(0.9650);left:238.82px;">00021</span>
<span class="t" style="top:625.50px;font-size:13px;color:#262626;transform:scaleX(1.0680);left:335.02px;">Vincent</span>
<span class="t" style="top:625.50px;font-size:13px;color:#262626;transform:scaleX(1.0680);left:430.82px;">Crenshaw</span>
<span class="t" style="top:625.50px;font-size:13px;color:#262626;transform:scaleX(1.0650);left:556.52px;">8/29/1924</span>
<span class="t" style="top:645.50px;font-size:13px;color:#262626;transform:scaleX(0.9650);left:238.82px;">00022</span>
<span class="t" style="top:645.50px;font-size:13px;color:#262626;transform:scaleX(1.0680);left:335.02px;">Vera</span>
<span class="t" style="top:645.50px;font-size:13px;color:#262626;transform:scaleX(1.0680);left:430.82px;">Eltsin</span>
<span class="t" style="top:645.50px;font-size:13px;color:#262626;transform:scaleX(1.0650);left:564.22px;">6/1/1949</span>
<span class="t" style="top:665.50px;font-size:13px;color:#262626;transform:scaleX(0.9650);left:238.82px;">00023</span>
<span class="t" style="top:665.50px;font-size:13px;color:#262626;transform:scaleX(1.0680);left:335.02px;">Scott</span>
<span class="t" style="top:665.50px;font-size:13px;color:#262626;transform:scaleX(1.0680);left:430.82px;">Kocen</span>
<span class="t" style="top:665.50px;font-size:13px;color:#262626;transform:scaleX(1.0650);left:556.52px;">9/12/1986</span>
<span class="t" style="top:685.50px;font-size:13px;color:#262626;transform:scaleX(0.9650);left:238.82px;">00024</span>
<span class="t" style="top:685.50px;font-size:13px;color:#262626;transform:scaleX(1.0680);left:335.02px;">Vernon</span>
<span class="t" style="top:685.50px;font-size:13px;color:#262626;transform:scaleX(1.0680);left:430.82px;">McCoy</span>
<span class="t" style="top:685.50px;font-size:13px;color:#262626;transform:scaleX(1.0650);left:549.84px;">11/20/1924</span>
<span class="t" style="top:705.50px;font-size:13px;color:#262626;transform:scaleX(0.9650);left:238.82px;">00025</span>
<span class="t" style="top:705.50px;font-size:13px;color:#262626;transform:scaleX(1.0680);left:335.02px;">Merle</span>
<span class="t" style="top:705.50px;font-size:13px;color:#262626;transform:scaleX(1.0680);left:430.82px;">Houchin</span>
<span class="t" style="top:705.50px;font-size:13px;color:#262626;transform:scaleX(1.0650);left:549.84px;">12/11/1974</span>
<span class="t" style="top:725.50px;font-size:13px;color:#262626;transform:scaleX(0.9650);left:238.82px;">00026</span>
<span class="t" style="top:725.50px;font-size:13px;color:#262626;transform:scaleX(1.0680);left:335.02px;">Antonio</span>
<span class="t" style="top:725.50px;font-size:13px;color:#262626;transform:scaleX(1.0680);left:430.82px;">Berry</span>
<span class="t" style="top:725.50px;font-size:13px;color:#262626;transform:scaleX(1.0650);left:550.88px;">11/16/1911</span>
<span class="t" style="top:745.50px;font-size:13px;color:#262626;transform:scaleX(0.9650);left:238.82px;">00027</span>
<span class="t" style="top:745.50px;font-size:13px;color:#262626;transform:scaleX(1.0680);left:335.02px;">Julie</span>
<span class="t" style="top:745.50px;font-size:13px;color:#262626;transform:scaleX(1.0680);left:430.82px;">Rosenberg</span>
<span class="t" style="top:745.50px;font-size:13px;color:#262626;transform:scaleX(1.0650);left:548.81px;">10/28/1944</span>
<span class="t" style="top:765.50px;font-size:13px;color:#262626;transform:scaleX(0.9650);left:238.82px;">00028</span>
<span class="t" style="top:765.50px;font-size:13px;color:#262626;transform:scaleX(1.0680);left:335.02px;">Sharon</span>
<span class="t" style="top:765.50px;font-size:13px;color:#262626;transform:scaleX(1.0680);left:430.82px;">Sullivan</span>
<span class="t" style="top:765.50px;font-size:13px;color:#262626;transform:scaleX(1.0650);left:556.52px;">7/22/1944</span>
<span class="t" style="top:785.50px;font-size:13px;color:#262626;transform:scaleX(0.9650);left:238.82px;">00029</span>
<span class="t" style="top:785.50px;font-size:13px;color:#262626;transform:scaleX(1.0680);left:335.02px;">Klaus</span>
<span class="t" style="top:785.50px;font-size:13px;color:#262626;transform:scaleX(1.0680);left:430.82px;">Durig</span>
<span class="t" style="top:785.50px;font-size:13px;color:#262626;transform:scaleX(1.0650);left:549.84px;">11/23/1976</span>
<span class="t" style="top:805.50px;font-size:13px;color:#262626;transform:scaleX(0.9650);left:238.82px;clip-path:inset(0 0 6px 0);">00030</span>
<span class="t" style="top:805.50px;font-size:13px;color:#262626;transform:scaleX(1.0680);left:335.02px;clip-path:inset(0 0 6px 0);">Celeste</span>
<span class="t" style="top:805.50px;font-size:13px;color:#262626;transform:scaleX(1.0680);left:430.82px;clip-path:inset(0 0 6px 0);">Kelso</span>
<span class="t" style="top:805.50px;font-size:13px;color:#262626;transform:scaleX(1.0650);left:564.22px;clip-path:inset(0 0 6px 0);">6/8/1972</span>
<span class="t" style="top:821.19px;font-size:11px;color:#555A66;left:221.84px;">Record:</span>
<span class="t" style="top:821.19px;font-size:11px;color:#111;left:297.84px;">1 of 1661</span>
<span class="t" style="top:821.19px;font-size:11px;color:#A8A8A8;transform:scaleX(1.0579);left:437.14px;">No Filter</span>
<span class="t" style="top:821.19px;font-size:11px;color:#111;left:497.34px;">Search</span>
<span class="t" style="top:839.08px;font-size:11.3px;color:#444;transform:scaleX(1.0110);left:8.07px;will-change:transform;">Datasheet View</span>
<span class="t" style="top:840.08px;font-size:11.3px;color:#444;transform:scaleX(0.9928);left:1453.82px;will-change:transform;">Num Lock</span>
<svg class="i" style="left:22px;top:10.5px;" width="14" height="14" viewBox="0 0 14 14"><path fill="#fff" fill-rule="evenodd" d="M1.2 0H12.8Q14 0 14 1.2V12.8Q14 14 12.8 14H1.2Q0 14 0 12.8V1.2Q0 0 1.2 0ZM1.6 1.6V6.8H12.4V1.6ZM1.6 8.4V12.4H3.4V8.4ZM10.6 8.4V12.4H12.4V8.4ZM5.6 10V14H8.2V10Z"/></svg>
<svg class="i" style="left:50.5px;top:11px;" width="15" height="13" viewBox="0 0 15 13"><path d="M5.5 0.8L1.2 5.1L5.5 9.4M1.5 5.1H9.2Q13.6 5.1 13.6 8.7Q13.6 12 9.5 12.2" fill="none" stroke="#C57F81" stroke-width="1.7"/></svg>
<svg class="i" style="left:71.3px;top:15px;" width="5" height="3" viewBox="0 0 5 3"><path d="M0 0H5L2.5 3Z" fill="#C57F81"/></svg>
<svg class="i" style="left:87px;top:11px;" width="15" height="13" viewBox="0 0 15 13"><path d="M9.5 0.8L13.8 5.1L9.5 9.4M13.5 5.1H5.8Q1.4 5.1 1.4 8.7Q1.4 12 5.5 12.2" fill="none" stroke="#C57F81" stroke-width="1.7"/></svg>
<svg class="i" style="left:107px;top:15px;" width="5" height="3" viewBox="0 0 5 3"><path d="M0 0H5L2.5 3Z" fill="#C57F81"/></svg>
<svg class="i" style="left:126.4px;top:15px;" width="6" height="6.5" viewBox="0 0 6 6.5"><path d="M0 0H6V1.2H0ZM0 3H6L3 6.2Z" fill="#fff"/></svg>
<svg class="i" style="left:1480px;top:16px;" width="11" height="2" viewBox="0 0 11 2"><path d="M0 0.9H10.5" stroke="#fff" stroke-width="1.1"/></svg>
<svg class="i" style="left:1525.5px;top:10.5px;" width="11" height="11" viewBox="0 0 11 11"><path d="M0.6 2.8H8V10.3H0.6ZM2.8 2.8V0.6H10.3V8H8" fill="none" stroke="#fff" stroke-width="1.1"/></svg>
<svg class="i" style="left:1572px;top:11px;" width="11" height="11" viewBox="0 0 11 11"><path d="M0.4 0.4L10.4 10.4M10.4 0.4L0.4 10.4" stroke="#fff" stroke-width="1.2"/></svg>
<svg class="i" style="left:610.5px;top:42.5px;" width="14" height="14" viewBox="0 0 14 14"><circle cx="8.6" cy="5.2" r="4.3" fill="none" stroke="#5E5E5E" stroke-width="1.1"/><path d="M5.6 8.3L0.7 13.2" stroke="#5E5E5E" stroke-width="1.3"/></svg>
<svg class="i" style="left:14px;top:70px;" width="32" height="30" viewBox="0 0 32 30"><path d="M0.9 1.3V22.9H21.5Z M5.25 11.2V18.8H12.7Z" fill="#808080" fill-rule="evenodd"/>
<path d="M8.8 23.2L10.9 17L26.3 1.6L31.2 6.5L16 21.8Z" fill="#F3F2F1"/>
<path d="M11.6 17.4L26.3 2.7L29.6 6L14.9 20.7Z" fill="#3F7DC1"/>
<path d="M11.2 17.9L14.4 21.1L9 22.8Z" fill="#3F7DC1"/>
<path d="M27.1 1.9L28.6 0.4L31.9 3.7L30.4 5.2Z" fill="#3F7DC1"/>
<rect x="4.6" y="24.7" width="24" height="4.8" fill="#fff" stroke="#E8873A" stroke-width="1.2"/>
<path d="M7.6 25V26.8M10.6 25V26.2M13.6 25V26.8M16.6 25V26.2M19.6 25V26.8M22.6 25V26.2M25.6 25V26.8" stroke="#E8873A" stroke-width="1"/></svg>
<svg class="i" style="left:25.5px;top:126.5px;" width="5.5" height="3" viewBox="0 0 5.5 3"><path d="M0 0H5.5L2.75 3Z" fill="#5E5E5E"/></svg>
<svg class="i" style="left:75px;top:72px;" width="29" height="31" viewBox="0 0 29 31"><rect x="0" y="3" width="23.75" height="25" rx="1.6" fill="#DAD7DA"/>
<path d="M9 1.6Q9 0 10.6 0H13.4Q15 0 15 1.6V3H18Q19 3 19 4V6.8H4.9V4Q4.9 3 5.9 3H9Z" fill="#B6B3B6"/><circle cx="12" cy="2.4" r="1" fill="#F3F2F1"/>
<path d="M14.2 11.4H23L27.8 16.2V30H14.2Z" fill="#F6F3F8" stroke="#AEABAE" stroke-width="0.9"/>
<path d="M23 11.4V16.2H27.8Z" fill="#E4E1E6" stroke="#AEABAE" stroke-width="0.7"/></svg>
<svg class="i" style="left:84.3px;top:126.5px;" width="5.5" height="3" viewBox="0 0 5.5 3"><path d="M0 0H5.5L2.75 3Z" fill="#C0BEBC"/></svg>
<svg class="i" style="left:112px;top:70px;" width="15" height="16" viewBox="0 0 15 16"><path d="M3.6 0.6L10.2 10.6M11.4 0.6L4.8 10.6" stroke="#5E5E5E" stroke-width="1.4" fill="none"/>
<circle cx="3.1" cy="12.6" r="2.3" fill="none" stroke="#3A78BD" stroke-width="1.2"/><circle cx="11.9" cy="12.6" r="2.3" fill="none" stroke="#3A78BD" stroke-width="1.2"/></svg>
<svg class="i" style="left:111px;top:94px;" width="16" height="15" viewBox="0 0 16 15"><path d="M0.5 0.6H5.2L7.4 2.8V10.7H0.5Z" fill="#fff" stroke="#5E5E5E" stroke-width="1"/>
<path d="M2.2 3.6H3.8M2.2 5.6H4.8M2.2 7.6H4.8" stroke="#3A78BD" stroke-width="0.9"/>
<path d="M6.6 3.7H12L14.7 6.4V13.8H6.6Z" fill="#fff" stroke="#5E5E5E" stroke-width="1"/>
<path d="M12 3.7V6.4H14.7" fill="none" stroke="#5E5E5E" stroke-width="0.8"/>
<path d="M8.4 6.6H10M8.4 8.7H13M8.4 10.8H13" stroke="#3A78BD" stroke-width="0.9"/></svg>
<svg class="i" style="left:112px;top:117px;" width="16" height="15" viewBox="0 0 16 15"><path d="M9.5 3.5L13.2 0.6L15.4 3.2L11.8 6.2Z" fill="#B9B7B5"/>
<path d="M6.2 4.2L11.4 9.8L9.2 11.6L4 6.2Z" fill="#C8C6C4"/>
<path d="M3.6 6.6L8.8 12L6.6 14.4Q3 12.6 0.4 9.4Z" fill="#D3D1CF"/></svg>
<svg class="i" style="left:211px;top:148px;" width="9" height="9" viewBox="0 0 9 9"><path d="M0.5 6.8V0.5H6.8" fill="none" stroke="#777" stroke-width="1"/><path d="M3.2 3.2L7 7M7.5 3V7.5H3" fill="none" stroke="#444" stroke-width="1.1"/></svg>
<svg class="i" style="left:1145px;top:148px;" width="9" height="9" viewBox="0 0 9 9"><path d="M0.5 6.8V0.5H6.8" fill="none" stroke="#777" stroke-width="1"/><path d="M3.2 3.2L7 7M7.5 3V7.5H3" fill="none" stroke="#444" stroke-width="1.1"/></svg>
<svg class="i" style="left:237.5px;top:71.5px;" width="28" height="28" viewBox="0 0 28 28"><path d="M0.4 0.4H27.6V1.6L16.4 13.4V27.2H11.6V13.4L0.4 1.6Z" fill="#808080"/><path d="M2.4 2.2L12.9 13V26.6" fill="none" stroke="#F3F2F1" stroke-width="1.1"/></svg>
<svg class="i" style="left:277px;top:71px;" width="15" height="17" viewBox="0 0 15 17"><text x="0.9" y="6.3" font-family="Liberation Sans" font-size="9.2" font-weight="700" fill="#3A78BD" textLength="6.2" lengthAdjust="spacingAndGlyphs">A</text>
<text x="0.9" y="14.4" font-family="Liberation Sans" font-size="9.2" font-weight="700" fill="#8E4CB0" textLength="6.2" lengthAdjust="spacingAndGlyphs">Z</text>
<path d="M11.2 0.8V14.6M8.4 11.6L11.2 14.8L14 11.6" fill="none" stroke="#4A4A4A" stroke-width="1.1"/></svg>
<svg class="i" style="left:277px;top:95px;" width="15" height="17" viewBox="0 0 15 17"><text x="0.9" y="6.3" font-family="Liberation Sans" font-size="9.2" font-weight="700" fill="#8E4CB0" textLength="6.2" lengthAdjust="spacingAndGlyphs">Z</text>
<text x="0.9" y="14.4" font-family="Liberation Sans" font-size="9.2" font-weight="700" fill="#3A78BD" textLength="6.2" lengthAdjust="spacingAndGlyphs">A</text>
<path d="M11.2 0.8V14.6M8.4 11.6L11.2 14.8L14 11.6" fill="none" stroke="#4A4A4A" stroke-width="1.1"/></svg>
<svg class="i" style="left:277px;top:119px;" width="15" height="17" viewBox="0 0 15 17"><text x="0.5" y="6.9" font-family="Liberation Sans" font-size="9.2" fill="#B8B6B4" textLength="6" lengthAdjust="spacingAndGlyphs">A</text>
<text x="0.5" y="15" font-family="Liberation Sans" font-size="9.2" fill="#B8B6B4" textLength="6" lengthAdjust="spacingAndGlyphs">Z</text>
<path d="M8 12.4L11.6 8.4L14.6 11L11 15Z" fill="#CFCDCB"/><path d="M6.4 13.6L8 12.4L11 15L9.6 16Z" fill="#E4E2E0"/></svg>
<svg class="i" style="left:372.5px;top:72px;" width="16" height="16" viewBox="0 0 16 16"><path d="M0.4 0.6H11.6L7.4 5.4V10.8H4.6V5.4Z" fill="#6E6E6E"/>
<path d="M12 3.4L8.2 9.6H10.8L8.6 15.2L14.8 7.6H11.8L14.2 3.4Z" fill="#F2B45A"/></svg>
<svg class="i" style="left:441.3px;top:78.5px;" width="5.5" height="3" viewBox="0 0 5.5 3"><path d="M0 0H5.5L2.75 3Z" fill="#5E5E5E"/></svg>
<svg class="i" style="left:372px;top:95px;" width="16" height="16" viewBox="0 0 16 16"><path d="M0.2 0.4H7L4.6 3.2V6.6H2.6V3.2Z" fill="#6E6E6E"/>
<rect x="4.6" y="4" width="11" height="11.4" fill="#fff" stroke="#5E5E5E" stroke-width="1"/>
<rect x="5.1" y="4.5" width="10" height="2.6" fill="#3A78BD"/>
<path d="M6.6 12.6H8M9.4 12.6H10.8M12.2 12.6H13.6" stroke="#5E5E5E" stroke-width="1.4"/></svg>
<svg class="i" style="left:446.5px;top:102.5px;" width="5.5" height="3" viewBox="0 0 5.5 3"><path d="M0 0H5.5L2.75 3Z" fill="#5E5E5E"/></svg>
<svg class="i" style="left:371.8px;top:119.8px;" width="16" height="15" viewBox="0 0 16 15"><path d="M0 0.2H15.2V1L9.2 7.4V14H6.2V7.4L0 1Z" fill="#ABA9AB"/></svg>
<svg class="i" style="left:487px;top:70.5px;" width="26" height="31" viewBox="0 0 26 31"><path d="M1 0.6H14.5V3" fill="none" stroke="#8A8886" stroke-width="1"/><path d="M1 0.6V27.4H4" fill="none" stroke="#8A8886" stroke-width="1"/>
<path d="M4.4 3.2H18.2L24.6 9.6V30.2H4.4Z" fill="#fff" stroke="#8A8886" stroke-width="1"/>
<path d="M18.2 3.2V9.6H24.6" fill="none" stroke="#8A8886" stroke-width="1"/>
<path d="M8.6 17.4A6 6 0 0 1 19.4 14.2L21 12.4V17.8H15.8L17.6 15.8A3.6 3.6 0 0 0 11.2 17.4Z" fill="#5BAE90"/>
<path d="M20.4 19.4A6 6 0 0 1 9.6 22.6L8 24.4V19H13.2L11.4 21A3.6 3.6 0 0 0 17.8 19.4Z" fill="#5BAE90"/></svg>
<svg class="i" style="left:506.3px;top:127.3px;" width="5" height="3" viewBox="0 0 5 3"><path d="M0 0H5L2.5 3Z" fill="#5E5E5E"/></svg>
<svg class="i" style="left:525px;top:71px;" width="15" height="14" viewBox="0 0 15 14"><path d="M3.2 0V6.4M0 3.2H6.4M0.9 0.9L5.5 5.5M5.5 0.9L0.9 5.5" stroke="#F0A030" stroke-width="0.9"/>
<rect x="1.6" y="6.6" width="12" height="6" fill="#fff" stroke="#5E5E5E" stroke-width="1"/>
<rect x="3.4" y="8.4" width="8.4" height="2.4" fill="#3A78BD"/></svg>
<svg class="i" style="left:525px;top:95px;" width="16.5" height="15" viewBox="0 0 16.5 15"><rect x="1.2" y="7.6" width="12.6" height="6.8" fill="#fff" stroke="#5E5E5E" stroke-width="1"/>
<rect x="3.2" y="10.2" width="7.6" height="2.2" fill="#3A78BD"/>
<path d="M5.6 0H16V9.8H5.6Z" fill="#8E4CB0"/><rect x="9.6" y="4" width="5" height="4.6" fill="#fff"/><rect x="12.2" y="4.8" width="1.4" height="2.6" fill="#8E4CB0"/></svg>
<svg class="i" style="left:525.5px;top:120.5px;" width="15" height="13.5" viewBox="0 0 15 13.5"><path d="M1 0.8L14 12.8M13.4 0.6L1 13" stroke="#5A5A5A" stroke-width="2.1" fill="none"/></svg>
<svg class="i" style="left:587px;top:127.3px;" width="5" height="3" viewBox="0 0 5 3"><path d="M0 0H5L2.5 3Z" fill="#5E5E5E"/></svg>
<svg class="i" style="left:600px;top:71px;" width="15.5" height="15.5" viewBox="0 0 15.5 15.5"><path d="M14.4 3.4V0.8H0.8V2L7.6 7.6L0.8 13.6V14.8H14.8V12" fill="none" stroke="#4A4A4A" stroke-width="1.9"/></svg>
<svg class="i" style="left:600.5px;top:95px;" width="15" height="16" viewBox="0 0 15 16"><text x="0.2" y="5.4" font-family="Liberation Sans" font-size="6.6" font-weight="700" fill="#555" textLength="13.4" lengthAdjust="spacingAndGlyphs">ABC</text>
<path d="M1.6 10.6L5.4 14.2L13.4 7" fill="none" stroke="#3A78BD" stroke-width="1.9"/></svg>
<svg class="i" style="left:600px;top:119px;" width="16" height="15.5" viewBox="0 0 16 15.5"><rect x="0.5" y="0.5" width="15" height="14.4" fill="#fff" stroke="#5E5E5E" stroke-width="1"/>
<rect x="0.5" y="0.5" width="15" height="2.6" fill="#3A78BD"/>
<rect x="1" y="6.8" width="14" height="3.8" fill="#C9D8EE"/>
<path d="M0.5 6.8H15.5M0.5 10.6H15.5M5.4 3.2V15M10.4 3.2V15" stroke="#5E5E5E" stroke-width="0.9" fill="none"/></svg>
<svg class="i" style="left:650px;top:127.3px;" width="5" height="3" viewBox="0 0 5 3"><path d="M0 0H5L2.5 3Z" fill="#5E5E5E"/></svg>
<svg class="i" style="left:690.5px;top:72px;" width="28" height="28" viewBox="0 0 28 28"><circle cx="17.4" cy="9.9" r="8.9" fill="#fff" stroke="#3F7DC1" stroke-width="2"/><path d="M10.6 16.8L2.4 25" stroke="#3F7DC1" stroke-width="3.4" stroke-linecap="round"/></svg>
<svg class="i" style="left:729px;top:70px;" width="17" height="16" viewBox="0 0 17 16"><text x="0" y="7.6" font-family="Liberation Sans" font-size="10.6" fill="#4A4A4A" textLength="5.8" lengthAdjust="spacingAndGlyphs">a</text><text x="6" y="7.6" font-family="Liberation Sans" font-size="10.6" fill="#8E4CB0" textLength="5.8" lengthAdjust="spacingAndGlyphs">b</text>
<text x="5.2" y="14.6" font-family="Liberation Sans" font-size="10.6" fill="#4A4A4A" textLength="5.6" lengthAdjust="spacingAndGlyphs">a</text><text x="10.9" y="14.6" font-family="Liberation Sans" font-size="10.6" fill="#3A78BD" textLength="5.2" lengthAdjust="spacingAndGlyphs">c</text>
<path d="M0.6 9.6V11.8H3.8M2.4 10.2L4 11.8L2.4 13.4" fill="none" stroke="#3A78BD" stroke-width="1"/></svg>
<svg class="i" style="left:730.7px;top:96.5px;" width="12" height="10" viewBox="0 0 12 10"><path d="M0.2 4.6H10.4M6.4 0.6L10.6 4.6L6.4 8.6" fill="none" stroke="#3F7DC1" stroke-width="2.1"/></svg>
<svg class="i" style="left:781.5px;top:100.3px;" width="5" height="3" viewBox="0 0 5 3"><path d="M0 0H5L2.5 3Z" fill="#5E5E5E"/></svg>
<svg class="i" style="left:732.6px;top:115.6px;" width="10" height="16" viewBox="0 0 10 16"><path d="M0.6 0.9V12.4L3.4 9.8L5.8 15L7.6 14.2L5.3 9.2H9Z" fill="#fff" stroke="#555" stroke-width="0.9"/></svg>
<svg class="i" style="left:782px;top:123.3px;" width="5" height="3" viewBox="0 0 5 3"><path d="M0 0H5L2.5 3Z" fill="#5E5E5E"/></svg>
<svg class="i" style="left:941px;top:86.5px;" width="5" height="3" viewBox="0 0 5 3"><path d="M0 0H5L2.5 3Z" fill="#5E5E5E"/></svg>
<svg class="i" style="left:996px;top:86.5px;" width="5" height="3" viewBox="0 0 5 3"><path d="M0 0H5L2.5 3Z" fill="#5E5E5E"/></svg>
<svg class="i" style="left:1009px;top:79.5px;" width="15" height="15" viewBox="0 0 15 15"><circle cx="1.4" cy="1.8" r="1.2" fill="#BDBBB9"/><circle cx="1.4" cy="7.4" r="1.2" fill="#BDBBB9"/><circle cx="1.4" cy="13" r="1.2" fill="#BDBBB9"/><path d="M5 1.8H14.4M5 7.4H14.4M5 13H14.4" stroke="#BDBBB9" stroke-width="1"/></svg>
<svg class="i" style="left:1031.5px;top:79.5px;" width="15" height="15" viewBox="0 0 15 15"><text x="0" y="4" font-size="4.6" font-family="Liberation Sans" fill="#BDBBB9">1</text><text x="0" y="9.4" font-size="4.6" font-family="Liberation Sans" fill="#BDBBB9">2</text><text x="0" y="14.8" font-size="4.6" font-family="Liberation Sans" fill="#BDBBB9">3</text><path d="M5 1.8H14.4M5 7.4H14.4M5 13H14.4" stroke="#BDBBB9" stroke-width="1"/></svg>
<svg class="i" style="left:1061.5px;top:79.5px;" width="17" height="15" viewBox="0 0 17 15"><path d="M0.4 0.8H16M8 4.6H16M8 8.4H16M0.4 12.4H16" stroke="#BDBBB9" stroke-width="1"/><path d="M0.6 6.5H5.4M3.6 4.4L5.8 6.5L3.6 8.6" fill="none" stroke="#BDBBB9" stroke-width="1"/></svg>
<svg class="i" style="left:1083.5px;top:79.5px;" width="17" height="15" viewBox="0 0 17 15"><path d="M0.4 0.8H16M8 4.6H16M8 8.4H16M0.4 12.4H16" stroke="#BDBBB9" stroke-width="1"/><path d="M1 6.5H5.8M2.8 4.4L0.6 6.5L2.8 8.6" fill="none" stroke="#BDBBB9" stroke-width="1"/></svg>
<svg class="i" style="left:1116.5px;top:82px;" width="13" height="10" viewBox="0 0 13 10"><path d="M0.4 1.2L4 4.4L0.4 7.6Z" fill="#BDBBB9"/><path d="M8.4 0.6V9.4M10.8 0.6V9.4M11.8 0.6H7.6Q5.2 0.8 5.2 3Q5.2 5.2 8.4 5.2" fill="#BDBBB9" stroke="#BDBBB9" stroke-width="0.9"/></svg>
<svg class="i" style="left:1137px;top:86.5px;" width="5" height="3" viewBox="0 0 5 3"><path d="M0 0H5L2.5 3Z" fill="#D0CECC"/></svg>
<svg class="i" style="left:890px;top:111px;" width="16" height="17" viewBox="0 0 16 17"><path d="M3.7 11.7L7.5 2.6H8.9L12.7 11.7M5.2 8.4H11.2" fill="none" stroke="#555" stroke-width="1.7"/><rect x="0" y="12" width="16" height="4" fill="#FF0000"/></svg>
<svg class="i" style="left:912px;top:118px;" width="5" height="3" viewBox="0 0 5 3"><path d="M0 0H5L2.5 3Z" fill="#5E5E5E"/></svg>
<svg class="i" style="left:924px;top:111px;" width="16" height="17" viewBox="0 0 16 17"><text x="0" y="7.4" font-size="9" font-family="Liberation Sans" fill="#B4B2B0">ab</text><path d="M5.2 10L12.8 2L15.2 4.2L7.6 11.6L4.4 12Z" fill="#C4C2C0"/><rect x="0" y="12" width="16" height="4" fill="#E4E0E8"/></svg>
<svg class="i" style="left:946px;top:118px;" width="5" height="3" viewBox="0 0 5 3"><path d="M0 0H5L2.5 3Z" fill="#D0CECC"/></svg>
<svg class="i" style="left:958px;top:110px;" width="17" height="17" viewBox="0 0 17 17"><path d="M3.4 7.4L8.2 2.4L13 7.2L7.4 12.4Z" fill="#fff" stroke="#555" stroke-width="1.1"/><path d="M6.4 4.4V1.6Q7.6 0.4 8.8 1.6V3.2" fill="none" stroke="#555" stroke-width="1"/><path d="M12.6 5.4Q16.4 7.6 14.8 11.6Q13.6 8.6 11.4 8.2Z" fill="#3A78BD"/><rect x="0" y="13" width="16" height="4" fill="#7F7F7F"/></svg>
<svg class="i" style="left:980.2px;top:118px;" width="5" height="3" viewBox="0 0 5 3"><path d="M0 0H5L2.5 3Z" fill="#5E5E5E"/></svg>
<svg class="i" style="left:1002px;top:113px;" width="15" height="12" viewBox="0 0 15 12"><path d="M0 0.8H14.6M0 4.2H10M0 7.6H14.6M0 11H10" stroke="#555" stroke-width="1"/></svg>
<svg class="i" style="left:1023.7px;top:113px;" width="15" height="12" viewBox="0 0 15 12"><path d="M0 0.8H14.6M2.4 4.2H12.2M0 7.6H14.6M2.4 11H12.2" stroke="#555" stroke-width="1"/></svg>
<svg class="i" style="left:1045.5px;top:113px;" width="15" height="12" viewBox="0 0 15 12"><path d="M0 0.8H14.6M4.6 4.2H14.6M0 7.6H14.6M4.6 11H14.6" stroke="#555" stroke-width="1"/></svg>
<svg class="i" style="left:1075.5px;top:111px;" width="16" height="16" viewBox="0 0 16 16"><path d="M0.5 15.5V0.5H15.5" fill="none" stroke="#555" stroke-width="1" stroke-dasharray="1 1"/><path d="M0.5 15.5H15.5V0.5Z" fill="#fff" stroke="#555" stroke-width="1"/><path d="M5.6 15.5V10.4M10.6 15.5V5.4M15.5 10.4H5.6M15.5 5.4H10.6" stroke="#555" stroke-width="0.9"/></svg>
<svg class="i" style="left:1096px;top:118px;" width="5" height="3" viewBox="0 0 5 3"><path d="M0 0H5L2.5 3Z" fill="#5E5E5E"/></svg>
<svg class="i" style="left:1118px;top:111px;" width="16.5" height="17" viewBox="0 0 16.5 17"><rect x="0.5" y="0.5" width="15.4" height="8.6" fill="#fff" stroke="#555" stroke-width="1"/><rect x="1" y="3.2" width="14.4" height="3" fill="#A9C4E6"/><path d="M0.5 3.2H16M0.5 6.2H16M5.6 0.5V9M10.8 0.5V9" stroke="#555" stroke-width="0.8"/><rect x="0" y="11.6" width="16.4" height="3.6" fill="#E9E7EB"/></svg>
<svg class="i" style="left:1140.3px;top:118px;" width="5" height="3" viewBox="0 0 5 3"><path d="M0 0H5L2.5 3Z" fill="#5E5E5E"/></svg>
<svg class="i" style="left:1581px;top:150.5px;" width="12" height="7" viewBox="0 0 12 7"><path d="M0.6 5.8L5.6 0.9L10.6 5.8" fill="none" stroke="#444" stroke-width="1.1"/></svg>
<svg class="i" style="left:177px;top:170px;" width="13" height="13" viewBox="0 0 13 13"><circle cx="6.5" cy="6.4" r="5.9" fill="#fff" stroke="#333" stroke-width="1"/><path d="M3.5 5.2H9.5L6.5 8.6Z" fill="#222"/></svg>
<svg class="i" style="left:198px;top:174px;" width="9" height="8" viewBox="0 0 9 8"><path d="M3.8 0.5L0.8 3.6L3.8 6.8M8 0.5L5 3.6L8 6.8" fill="none" stroke="#3B4452" stroke-width="1.1"/></svg>
<svg class="i" style="left:194px;top:197px;" width="15" height="15" viewBox="0 0 15 15"><circle cx="8.9" cy="5.6" r="3.6" fill="#fff" stroke="#3B73B9" stroke-width="1.5"/><path d="M6 8.4L1.8 12" stroke="#3B73B9" stroke-width="2.1" stroke-linecap="round"/></svg>
<svg class="i" style="left:192px;top:221px;" width="8" height="8.5" viewBox="0 0 8 8.5"><path d="M0.6 3.6L3.7 0.7L6.8 3.6M0.6 7.6L3.7 4.7L6.8 7.6" fill="none" stroke="#3B4452" stroke-width="1.1"/></svg>
<svg class="i" style="left:192px;top:310.5px;" width="8" height="8.5" viewBox="0 0 8 8.5"><path d="M0.6 3.6L3.7 0.7L6.8 3.6M0.6 7.6L3.7 4.7L6.8 7.6" fill="none" stroke="#3B4452" stroke-width="1.1"/></svg>
<svg class="i" style="left:15px;top:238px;" width="16.5" height="13" viewBox="0 0 16.5 13"><rect x="0" y="0" width="16" height="12.4" fill="#A7B5D9"/>
<rect x="0" y="0" width="16" height="2.6" fill="#7C90C6"/>
<path d="M1 3.4H5.2V5.6H1ZM6.2 3.4H10.2V5.6H6.2ZM11.2 3.4H15V5.6H11.2ZM1 6.6H5.2V8.6H1ZM6.2 6.6H10.2V8.6H6.2ZM11.2 6.6H15V8.6H11.2ZM1 9.6H5.2V11.4H1ZM6.2 9.6H10.2V11.4H6.2ZM11.2 9.6H15V11.4H11.2Z" fill="#FFFFFF"/>
<path d="M0.3 12.6H16.2V0.4" fill="none" stroke="#3F5285" stroke-width="0.9"/><path d="M0.3 0V12.6" stroke="#7D8FBF" stroke-width="0.6"/></svg>
<svg class="i" style="left:15px;top:262px;" width="16.5" height="13" viewBox="0 0 16.5 13"><rect x="0" y="0" width="16" height="12.4" fill="#A7B5D9"/>
<rect x="0" y="0" width="16" height="2.6" fill="#7C90C6"/>
<path d="M1 3.4H5.2V5.6H1ZM6.2 3.4H10.2V5.6H6.2ZM11.2 3.4H15V5.6H11.2ZM1 6.6H5.2V8.6H1ZM6.2 6.6H10.2V8.6H6.2ZM11.2 6.6H15V8.6H11.2ZM1 9.6H5.2V11.4H1ZM6.2 9.6H10.2V11.4H6.2ZM11.2 9.6H15V11.4H11.2Z" fill="#FFFFFF"/>
<path d="M0.3 12.6H16.2V0.4" fill="none" stroke="#3F5285" stroke-width="0.9"/><path d="M0.3 0V12.6" stroke="#7D8FBF" stroke-width="0.6"/></svg>
<svg class="i" style="left:15px;top:286px;" width="16.5" height="13" viewBox="0 0 16.5 13"><rect x="0" y="0" width="16" height="12.4" fill="#A7B5D9"/>
<rect x="0" y="0" width="16" height="2.6" fill="#7C90C6"/>
<path d="M1 3.4H5.2V5.6H1ZM6.2 3.4H10.2V5.6H6.2ZM11.2 3.4H15V5.6H11.2ZM1 6.6H5.2V8.6H1ZM6.2 6.6H10.2V8.6H6.2ZM11.2 6.6H15V8.6H11.2ZM1 9.6H5.2V11.4H1ZM6.2 9.6H10.2V11.4H6.2ZM11.2 9.6H15V11.4H11.2Z" fill="#FFFFFF"/>
<path d="M0.3 12.6H16.2V0.4" fill="none" stroke="#3F5285" stroke-width="0.9"/><path d="M0.3 0V12.6" stroke="#7D8FBF" stroke-width="0.6"/></svg>
<svg class="i" style="left:15px;top:328.3px;" width="15.5" height="14" viewBox="0 0 15.5 14"><rect x="0.4" y="0.4" width="14.4" height="13" fill="#FDFDFE" stroke="#8791B4" stroke-width="0.8"/>
<rect x="0.4" y="0.4" width="14.4" height="2.6" fill="#C4587E"/><path d="M0.2 13.6H15V0.6" fill="none" stroke="#46558A" stroke-width="0.9"/>
<path d="M2.4 6.2H5.4M2.4 9.8H5.4" stroke="#46558A" stroke-width="1.2"/><rect x="7.2" y="5" width="5" height="2.4" fill="#fff" stroke="#46558A" stroke-width="0.9"/><rect x="7.2" y="8.6" width="5" height="2.4" fill="#fff" stroke="#46558A" stroke-width="0.9"/></svg>
<svg class="i" style="left:223px;top:166px;" width="16.5" height="13" viewBox="0 0 16.5 13"><rect x="0" y="0" width="16" height="12.4" fill="#A7B5D9"/>
<rect x="0" y="0" width="16" height="2.6" fill="#7C90C6"/>
<path d="M1 3.4H5.2V5.6H1ZM6.2 3.4H10.2V5.6H6.2ZM11.2 3.4H15V5.6H11.2ZM1 6.6H5.2V8.6H1ZM6.2 6.6H10.2V8.6H6.2ZM11.2 6.6H15V8.6H11.2ZM1 9.6H5.2V11.4H1ZM6.2 9.6H10.2V11.4H6.2ZM11.2 9.6H15V11.4H11.2Z" fill="#FFFFFF"/>
<path d="M0.3 12.6H16.2V0.4" fill="none" stroke="#3F5285" stroke-width="0.9"/><path d="M0.3 0V12.6" stroke="#7D8FBF" stroke-width="0.6"/></svg>
<svg class="i" style="left:378px;top:166px;" width="16.5" height="13" viewBox="0 0 16.5 13"><rect x="0" y="0" width="16" height="12.4" fill="#A7B5D9"/>
<rect x="0" y="0" width="16" height="2.6" fill="#7C90C6"/>
<path d="M1 3.4H5.2V5.6H1ZM6.2 3.4H10.2V5.6H6.2ZM11.2 3.4H15V5.6H11.2ZM1 6.6H5.2V8.6H1ZM6.2 6.6H10.2V8.6H6.2ZM11.2 6.6H15V8.6H11.2ZM1 9.6H5.2V11.4H1ZM6.2 9.6H10.2V11.4H6.2ZM11.2 9.6H15V11.4H11.2Z" fill="#FFFFFF"/>
<path d="M0.3 12.6H16.2V0.4" fill="none" stroke="#3F5285" stroke-width="0.9"/><path d="M0.3 0V12.6" stroke="#7D8FBF" stroke-width="0.6"/></svg>
<svg class="i" style="left:354.7px;top:167.8px;" width="11" height="11" viewBox="0 0 11 11"><path d="M0.5 0.5L10 10M10 0.5L0.5 10" stroke="#4A4A4A" stroke-width="1.15"/></svg>
<svg class="i" style="left:448.8px;top:167.8px;" width="11" height="11" viewBox="0 0 11 11"><path d="M0.5 0.5L10 10M10 0.5L0.5 10" stroke="#4A4A4A" stroke-width="1.15"/></svg>
<svg class="i" style="left:220px;top:189px;" width="14" height="13" viewBox="0 0 14 13"><defs><linearGradient id="sa" x1="0" y1="0" x2="0" y2="1"><stop offset="0" stop-color="#fff"/><stop offset="1" stop-color="#D3D7E0"/></linearGradient></defs><path d="M11.6 1V11.6H1Z" fill="url(#sa)"/><path d="M0.8 11.8L11.8 0.8" stroke="#A9C6EE" stroke-width="0.9" stroke-dasharray="1.2 0.6"/></svg>
<svg class="i" style="left:318.3px;top:192.5px;" width="9" height="6" viewBox="0 0 9 6"><path d="M0.8 1H8.2L4.5 5Z" fill="#fff" stroke="#fff" stroke-width="2" stroke-linejoin="round" opacity="0.85"/><path d="M1.2 1.2H7.8L4.5 4.7Z" fill="#1A1A1A"/></svg>
<svg class="i" style="left:413.7px;top:192.5px;" width="9" height="6" viewBox="0 0 9 6"><path d="M0.8 1H8.2L4.5 5Z" fill="#fff" stroke="#fff" stroke-width="2" stroke-linejoin="round" opacity="0.85"/><path d="M1.2 1.2H7.8L4.5 4.7Z" fill="#1A1A1A"/></svg>
<svg class="i" style="left:510.0px;top:192.5px;" width="9" height="6" viewBox="0 0 9 6"><path d="M0.8 1H8.2L4.5 5Z" fill="#fff" stroke="#fff" stroke-width="2" stroke-linejoin="round" opacity="0.85"/><path d="M1.2 1.2H7.8L4.5 4.7Z" fill="#1A1A1A"/></svg>
<svg class="i" style="left:606.0px;top:192.5px;" width="9" height="6" viewBox="0 0 9 6"><path d="M0.8 1H8.2L4.5 5Z" fill="#fff" stroke="#fff" stroke-width="2" stroke-linejoin="round" opacity="0.85"/><path d="M1.2 1.2H7.8L4.5 4.7Z" fill="#1A1A1A"/></svg>
<svg class="i" style="left:702.0px;top:192.5px;" width="9" height="6" viewBox="0 0 9 6"><path d="M0.8 1H8.2L4.5 5Z" fill="#fff" stroke="#fff" stroke-width="2" stroke-linejoin="round" opacity="0.85"/><path d="M1.2 1.2H7.8L4.5 4.7Z" fill="#1A1A1A"/></svg>
<svg class="i" style="left:800.8px;top:192.5px;" width="9" height="6" viewBox="0 0 9 6"><path d="M0.8 1H8.2L4.5 5Z" fill="#fff" stroke="#fff" stroke-width="2" stroke-linejoin="round" opacity="0.85"/><path d="M1.2 1.2H7.8L4.5 4.7Z" fill="#1A1A1A"/></svg>
<svg class="i" style="left:1588px;top:191.5px;" width="8" height="5" viewBox="0 0 8 5"><path d="M0 4.6H7.4L3.7 0.4Z" fill="#606060"/></svg>
<svg class="i" style="left:1588px;top:809.5px;" width="8" height="5" viewBox="0 0 8 5"><path d="M0 0.4H7.4L3.7 4.6Z" fill="#606060"/></svg>
<svg class="i" style="left:267.5px;top:827px;" width="7" height="7" viewBox="0 0 7 7"><path d="M0.8 0V7" stroke="#3C3C3C" stroke-width="1.3"/><path d="M6.6 0V7L2.4 3.5Z" fill="#3C3C3C"/></svg>
<svg class="i" style="left:286px;top:827px;" width="5" height="7" viewBox="0 0 5 7"><path d="M4.3 0V7L0 3.5Z" fill="#C4C4C4"/></svg>
<svg class="i" style="left:362px;top:827px;" width="5" height="7" viewBox="0 0 5 7"><path d="M0 0V7L4.3 3.5Z" fill="#3C3C3C"/></svg>
<svg class="i" style="left:378px;top:827px;" width="7" height="7" viewBox="0 0 7 7"><path d="M5.6 0V7" stroke="#3C3C3C" stroke-width="1.3"/><path d="M0 0V7L4.3 3.5Z" fill="#3C3C3C"/></svg>
<svg class="i" style="left:392px;top:827px;" width="13" height="7" viewBox="0 0 13 7"><path d="M0 0V7L4.3 3.5Z" fill="#3C3C3C"/><path d="M8.7 0.2V6.8M5.6 3.5H11.8M6.5 1.3L10.9 5.7M10.9 1.3L6.5 5.7" stroke="#F0A840" stroke-width="0.9"/></svg>
<svg class="i" style="left:418.8px;top:824.4px;" width="15" height="14" viewBox="0 0 15 14"><path d="M0 0H11.2L6.8 4.6V9.4H4.4V4.6Z" fill="#B4B4B8"/><path d="M7.2 7.6L14 13.2M14 7.6L7.2 13.2" stroke="#BDBDC1" stroke-width="1.2"/></svg>
<svg class="i" style="left:1535px;top:842px;" width="14" height="13" viewBox="0 0 14 13"><rect x="0.6" y="0.6" width="12.6" height="11.6" fill="none" stroke="#555" stroke-width="1.1"/><path d="M0.6 3.4H13.2M3.6 3.4V12.2M5.8 6H8.2M9.6 6H12M5.8 9H8.2M9.6 9H12" stroke="#555" stroke-width="1.1"/></svg>
<svg class="i" style="left:1572.5px;top:842px;" width="15" height="13.5" viewBox="0 0 15 13.5"><path d="M1 0.6V7H7.4Z" fill="none" stroke="#555" stroke-width="1"/><path d="M2.6 4.2V5.4H3.8" fill="none" stroke="#555" stroke-width="0.8"/><path d="M7 7.2L7.6 5.4L12 1L13.4 2.4L9 6.8Z" fill="#F3F2F1" stroke="#555" stroke-width="1"/><rect x="1.8" y="9.6" width="12.6" height="3" fill="none" stroke="#555" stroke-width="1"/><path d="M4.2 9.8V11M6.6 9.8V11M9 9.8V11M11.4 9.8V11" stroke="#555" stroke-width="0.7"/></svg>
</body></html>
